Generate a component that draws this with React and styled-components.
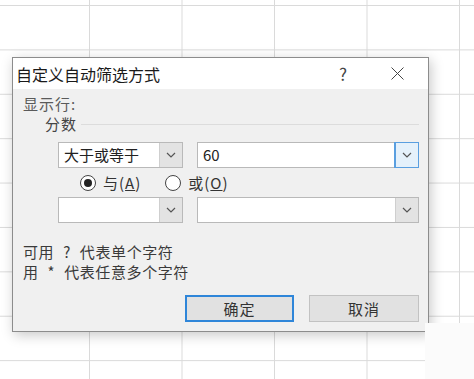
import React from 'react';
import styled, { createGlobalStyle } from 'styled-components';

const GlobalStyle = createGlobalStyle`
    body {
        margin: 0;
        font-family: "Noto Sans CJK SC", "Liberation Sans", sans-serif;
    }
`

const Sheet = styled.div`
    position: relative;
    width: 474px;
    height: 379px;
    box-sizing: border-box;
    padding: 57px 0 0 12px;
    overflow: hidden;
    background-color: #fff;
    background-image:
        linear-gradient(to right, #dadada 1px, transparent 1px),
        linear-gradient(to bottom, #dadada 1px, transparent 1px);
    background-size: 92.5px 44.4px;
    background-position: 89px 5px;
`

const Watermark = styled.div`
    position: absolute;
    left: 425px;
    top: 323px;
    width: 49px;
    height: 56px;
    background: #fbfbfb;
`

const Dialog = styled.div`
    width: 417px;
    height: 275px;
    box-sizing: border-box;
    border: 1px solid #8c8c8c;
    background: #f0f0f0;
    box-shadow: 2px 3px 12px rgba(0, 0, 0, 0.22);
    display: flex;
    flex-direction: column;
`

const TitleBar = styled.div`
    height: 31px;
    background: #fff;
    display: flex;
    align-items: center;
    padding-left: 3px;
`

const Title = styled.div`
    flex: 1;
    font-size: 16px;
    color: #1a1a1a;
`

const TitleButton = styled.div`
    width: ${p => p.w}px;
    display: flex;
    justify-content: center;
    align-items: center;
    font-size: 17px;
    color: #444;
`

const Body = styled.div`
    padding: 5px 9px 0 10px;
    font-size: 15px;
    color: #333;
`

const Caption = styled.div`
    line-height: 20px;
    letter-spacing: 1px;
    color: #5a5a5a;
`

const Group = styled.div`
    display: flex;
    align-items: center;
    padding-left: 22px;
    line-height: 20px;
    letter-spacing: 1px;
    color: #444;
`

const Rule = styled.div`
    flex: 1;
    height: 1px;
    background: #dcdcdc;
    margin-left: 4px;
`

const Row = styled.div`
    display: flex;
    gap: 14px;
    margin: ${p => p.top}px 0 0 35px;
`

const Field = styled.div`
    width: ${p => p.w}px;
    height: 26px;
    box-sizing: border-box;
    border: 1px solid #b9b9b9;
    background: #fff;
    display: flex;
    align-items: stretch;
`

const FieldText = styled.div`
    flex: 1;
    padding-left: 5px;
    font-size: 15px;
    line-height: 24px;
    color: #222;
`

const DropButton = styled.div`
    width: 22px;
    display: flex;
    align-items: center;
    justify-content: center;
    background: ${p => p.focus ? '#e5f1fb' : '#e3e3e3'};
    border-left: 1px solid ${p => p.focus ? '#5a9fe0' : '#cfcfcf'};
    outline: ${p => p.focus ? '1px solid #5a9fe0' : 'none'};
`

const RadioRow = styled.div`
    display: flex;
    align-items: center;
    height: 29px;
    margin-left: 57px;
    gap: 24px;
`

const RadioItem = styled.div`
    display: flex;
    align-items: center;
    gap: 7px;
    font-size: 15px;
    letter-spacing: 1px;
    color: #333;
`

const RadioCircle = styled.div`
    width: 16px;
    height: 16px;
    box-sizing: border-box;
    border: 1px solid #444;
    border-radius: 50%;
    background: #fff;
    display: flex;
    align-items: center;
    justify-content: center;
    &::after {
        content: '';
        display: ${p => p.checked ? 'block' : 'none'};
        width: 8px;
        height: 8px;
        border-radius: 50%;
        background: #222;
    }
`

const Key = styled.span`
    text-decoration: underline;
`

const Hints = styled.div`
    margin-top: 19px;
    line-height: 20px;
    letter-spacing: 0.6px;
    word-spacing: 5px;
    color: #3a3a3a;
`

const Buttons = styled.div`
    display: flex;
    justify-content: flex-end;
    gap: 15px;
    margin-top: 13px;
`

const Button = styled.div`
    width: ${p => p.w}px;
    height: 27px;
    box-sizing: border-box;
    border: ${p => p.primary ? '2px solid #2f86d9' : '1px solid #c2c2c2'};
    background: #e1e1e1;
    display: flex;
    align-items: center;
    justify-content: center;
    font-size: 15px;
    letter-spacing: 1px;
    color: #333;
`

const Chevron = () => (
    <svg width="10" height="6" viewBox="0 0 10 6">
        <path d="M1 1 L5 5 L9 1" fill="none" stroke="#555" strokeWidth="1.2" />
    </svg>
)

const CloseIcon = () => (
    <svg width="13" height="13" viewBox="0 0 13 13">
        <path d="M0.5 0.5 L12.5 12.5 M12.5 0.5 L0.5 12.5" stroke="#444" strokeWidth="1" />
    </svg>
)

const App = () => {
    return (
        <Sheet>
            <GlobalStyle />
            <Dialog>
                <TitleBar>
                    <Title>自定义自动筛选方式</Title>
                    <TitleButton w={46}>?</TitleButton>
                    <TitleButton w={62}><CloseIcon /></TitleButton>
                </TitleBar>
                <Body>
                    <Caption>显示行:</Caption>
                    <Group>
                        分数
                        <Rule />
                    </Group>
                    <Row top={8}>
                        <Field w={125}>
                            <FieldText>大于或等于</FieldText>
                            <DropButton><Chevron /></DropButton>
                        </Field>
                        <Field w={222}>
                            <FieldText>60</FieldText>
                            <DropButton focus><Chevron /></DropButton>
                        </Field>
                    </Row>
                    <RadioRow>
                        <RadioItem>
                            <RadioCircle checked />
                            <span>与(<Key>A</Key>)</span>
                        </RadioItem>
                        <RadioItem>
                            <RadioCircle />
                            <span>或(<Key>O</Key>)</span>
                        </RadioItem>
                    </RadioRow>
                    <Row top={0}>
                        <Field w={125}>
                            <FieldText />
                            <DropButton><Chevron /></DropButton>
                        </Field>
                        <Field w={222}>
                            <FieldText />
                            <DropButton><Chevron /></DropButton>
                        </Field>
                    </Row>
                    <Hints>
                        <div>可用 ? 代表单个字符</div>
                        <div>用 * 代表任意多个字符</div>
                    </Hints>
                    <Buttons>
                        <Button w={109} primary>确定</Button>
                        <Button w={110}>取消</Button>
                    </Buttons>
                </Body>
            </Dialog>
            <Watermark />
        </Sheet>
    )
}

export default App
